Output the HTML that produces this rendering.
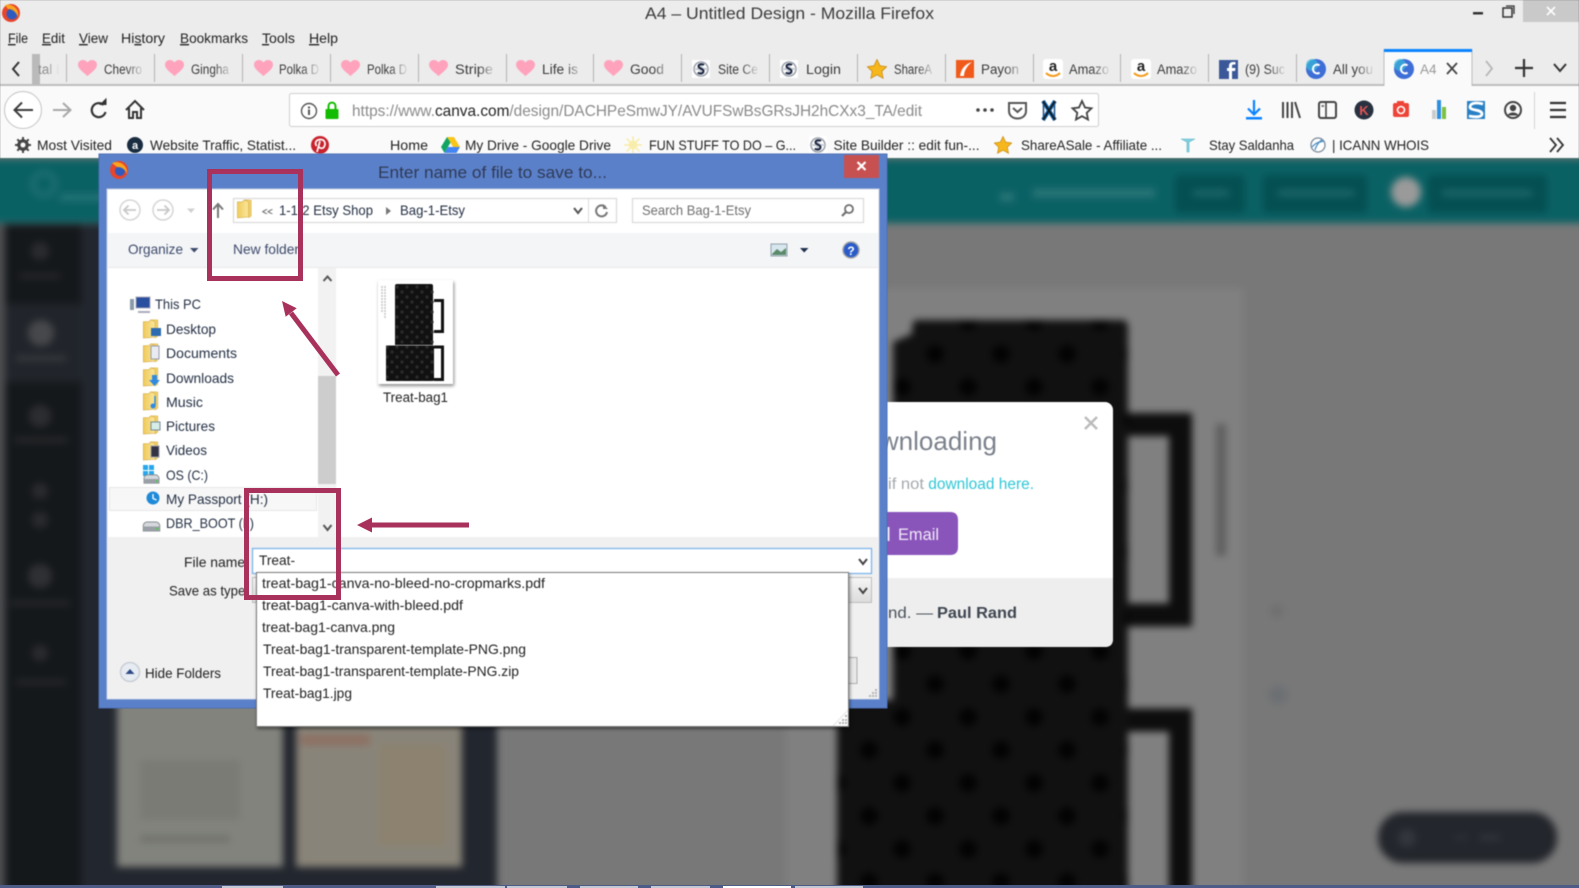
<!DOCTYPE html>
<html lang="en"><head><meta charset="utf-8"><title>A4 – Untitled Design - Mozilla Firefox</title>
<style>
html,body{margin:0;padding:0;width:1579px;height:888px;overflow:hidden;background:#787878}
svg{position:absolute;left:0;top:0;display:block}
.clip{position:absolute;left:0;top:0;width:1579px;height:888px;overflow:hidden}
svg.bg{left:-20px;top:-20px;filter:blur(3.8px)}
text{font-family:"Liberation Sans",sans-serif}
.m{font-size:14px;fill:#222}
.u{text-decoration:underline}
.tb{font-size:13.5px;fill:#3a3a3a}
.bm{font-size:14px;fill:#222}
.d{font-size:14px;fill:#243044}
.l{font-size:14px;fill:#222}
</style></head><body>
<!-- blurred Canva backdrop -->
<div class="clip">
<svg class="bg" width="1619" height="928" viewBox="-20 -20 1619 928" xmlns="http://www.w3.org/2000/svg">
<defs>
<pattern id="dots" width="66" height="66" patternUnits="userSpaceOnUse" x="-1" y="14">
<circle cx="12" cy="10" r="9" fill="#030303"/><circle cx="45" cy="43" r="9" fill="#030303"/></pattern>
</defs>
<rect x="-20" y="-20" width="1619" height="928" fill="#787878"/>
<rect x="786" y="288" width="457" height="620" fill="#808080"/>
<rect x="-20" y="224" width="26" height="684" fill="#4e4f51"/>
<rect x="5" y="224" width="492" height="684" fill="#22262e"/>
<rect x="5" y="224" width="76" height="684" fill="#15181b"/>
<rect x="5" y="304" width="76" height="78" fill="#21252b"/>
<circle cx="40" cy="251" r="9" fill="#2a2b2f"/><rect x="20" y="274" width="40" height="4" fill="#2a2b2f"/>
<circle cx="41" cy="333" r="13" fill="#47484b"/><rect x="16" y="356" width="50" height="5" fill="#3a3b3e"/>
<circle cx="40" cy="416" r="11" fill="#2c2d30"/><rect x="14" y="438" width="54" height="4" fill="#2b2c2f"/>
<circle cx="40" cy="491" r="8" fill="#2a2b2e"/><circle cx="40" cy="520" r="8" fill="#2a2b2e"/>
<circle cx="40" cy="576" r="12" fill="#2f3033"/><rect x="10" y="601" width="60" height="4" fill="#2a2b2e"/>
<circle cx="40" cy="653" r="8" fill="#2a2b2e"/><rect x="16" y="680" width="50" height="4" fill="#2a2b2e"/>
<rect x="117" y="690" width="166" height="177" fill="#82837d"/>
<rect x="296" y="690" width="166" height="177" fill="#898479"/>
<rect x="300" y="735" width="70" height="10" fill="#8d6f62"/>
<rect x="140" y="760" width="100" height="60" fill="#7a7b74"/>
<rect x="140" y="835" width="90" height="8" fill="#73746e"/>
<rect x="380" y="745" width="65" height="100" fill="#8c826f"/>
<rect x="-20" y="159" width="1619" height="64" fill="#0a6164"/>
<rect x="60" y="195" width="70" height="5" fill="#2c7a7c"/>
<circle cx="44" cy="184" r="11" fill="none" stroke="#2c7a7c" stroke-width="3"/>
<rect x="1000" y="193" width="14" height="8" fill="#2b7779"/><rect x="1033" y="189" width="122" height="8" fill="#2b7779"/>
<rect x="1175" y="175" width="70" height="38" rx="4" fill="#044f52"/><rect x="1193" y="190" width="36" height="6" fill="#1e686a"/>
<rect x="1263" y="175" width="104" height="38" rx="4" fill="#044f52"/><rect x="1278" y="190" width="76" height="6" fill="#1e686a"/>
<rect x="1428" y="175" width="119" height="38" rx="4" fill="#044f52"/><rect x="1442" y="190" width="90" height="6" fill="#1e686a"/>
<circle cx="1406" cy="192" r="15" fill="#9a9a9a"/>
<!-- bag -->
<path d="M916 320H1122Q1128 320 1128 328V700H893V342L912 334Q912 320 916 320Z" fill="#111"/>
<rect x="837" y="700" width="291" height="208" fill="#111"/>
<path d="M916 320H1128V700H893V342L912 334Z" fill="url(#dots)"/>
<rect x="837" y="700" width="291" height="208" fill="url(#dots)"/>
<path d="M1128 424.500H1180.500V615H1128" fill="none" stroke="#0d0d0d" stroke-width="23"/>
<path d="M1128 720H1180.500V910" fill="none" stroke="#0d0d0d" stroke-width="23"/>
<rect x="1216" y="424" width="10" height="132" fill="#5f5f5f"/>
<circle cx="1277" cy="611" r="7" fill="#707070"/><circle cx="1278" cy="695" r="10" fill="#6d7073"/>
<rect x="1378" y="812" width="179" height="51" rx="25" fill="#23262c"/>
<circle cx="1407" cy="838" r="9" fill="#33363c"/><rect x="1480" y="835" width="20" height="5" fill="#34373d"/><rect x="1455" y="836" width="12" height="3" fill="#34373d"/>
</svg>
</div>

<svg width="1579" height="888" viewBox="0 0 1579 888" xmlns="http://www.w3.org/2000/svg">
<defs>
<filter id="b1" color-interpolation-filters="sRGB"><feGaussianBlur stdDeviation="0.42"/></filter>
<filter id="sh" x="-5%" y="-5%" width="110%" height="110%" color-interpolation-filters="sRGB"><feDropShadow dx="1" dy="2" stdDeviation="1.5" flood-color="#000" flood-opacity=".45"/></filter>
<linearGradient id="fade"><stop offset="0" stop-color="#ececec" stop-opacity="0"/><stop offset=".7" stop-color="#ececec"/><stop offset="1" stop-color="#ececec"/></linearGradient>
<linearGradient id="fold" x1="0" y1="0" x2="1" y2="0"><stop offset="0" stop-color="#efc95c"/><stop offset="1" stop-color="#fbe79a"/></linearGradient>
<linearGradient id="combo" x1="0" y1="0" x2="0" y2="1"><stop offset="0" stop-color="#f6f6f6"/><stop offset="1" stop-color="#dcdcdc"/></linearGradient>
<pattern id="tdots" width="10" height="10" patternUnits="userSpaceOnUse"><circle cx="2" cy="2" r="1.6" fill="#2c2c2c"/><circle cx="7" cy="7" r="1.6" fill="#2c2c2c"/></pattern>
<symbol id="heart" viewBox="0 0 20 20" preserveAspectRatio="none"><path d="M10 19C4 13 0 10 0 5.500C0 2 2.500 0 5.200 0C7.300 0 9 1.200 10 3C11 1.200 12.700 0 14.800 0C17.500 0 20 2 20 5.500C20 10 16 13 10 19Z" fill="#ffa3bd"/></symbol>
<symbol id="site" viewBox="0 0 18 18"><rect width="18" height="18" fill="#fff"/><circle cx="9" cy="9" r="7" fill="none" stroke="#9a9fa8" stroke-width="1.500"/><path d="M9 0L10.500 7.500L18 9L10.500 10.500L9 18L7.500 10.500L0 9L7.500 7.500Z" fill="#c4c8cf"/><path d="M12 5C10.500 3.800 6.800 3.800 6.500 6.200C6.300 8.800 11.700 8.500 11.500 11.300C11.300 14 7.500 14 5.800 12.500" fill="none" stroke="#18233f" stroke-width="2"/></symbol>
<symbol id="star" viewBox="0 0 20 20"><path d="M10 0.500L13 6.800L19.800 7.700L14.800 12.300L16.100 19.200L10 15.800L3.900 19.200L5.200 12.300L0.200 7.700L7 6.800Z" fill="#f6b71c" stroke="#c98a12" stroke-width=".8"/></symbol>
<symbol id="amz" viewBox="0 0 20 20"><rect width="20" height="20" rx="3" fill="#fff"/><text x="10" y="12" font-size="15" font-weight="bold" text-anchor="middle" fill="#222" style="font-family:'Liberation Sans',sans-serif">a</text><path d="M3 14C7 18 13 18 17 14" fill="none" stroke="#f39a1c" stroke-width="2"/></symbol>
<symbol id="canva" viewBox="0 0 20 20"><circle cx="10" cy="10" r="10" fill="#3d6fd6"/><circle cx="6" cy="6" r="6" fill="#38b6d9" opacity=".7"/><path d="M13.500 6.500C11.500 4.500 7 6 7 10C7 14 11.500 15.500 13.500 13.500" fill="none" stroke="#fff" stroke-width="2"/></symbol>
<symbol id="folder" viewBox="0 0 18 22"><path d="M0 3H6L8 1H13V20L0 21Z" fill="url(#fold)" stroke="#d2ac4a" stroke-width=".7"/><path d="M8 1H16V19L13 21V3Z" fill="#f1cf68" stroke="#d2ac4a" stroke-width=".5"/></symbol>
<symbol id="drive" viewBox="0 0 20 12"><path d="M1 5C1 3 3 1 5 1H15C17 1 19 3 19 5V11H1Z" fill="#d4d8dc" stroke="#7d8288"/><rect x="1" y="6" width="18" height="5" fill="#9aa0a6"/><rect x="15" y="7.500" width="2.500" height="2" fill="#49d04a"/></symbol>
</defs>

<rect x="0" y="885" width="1579" height="3" fill="#4d5b86"/>
<g fill="#c4c9d4"><rect x="222" y="886" width="61" height="2"/><rect x="436" y="886" width="69" height="2"/><rect x="507" y="886" width="60" height="2"/><rect x="580" y="886" width="58" height="2"/><rect x="651" y="886" width="59" height="2"/><rect x="723" y="886" width="68" height="2" fill="#fff"/><rect x="795" y="886" width="68" height="2"/></g>

<!-- Firefox chrome -->
<g filter="url(#b1)">
<rect x="0" y="0" width="1579" height="86" fill="#ececec"/>
<rect x="0" y="84" width="1579" height="2" fill="#bdbdbd"/>
<rect x="0" y="86" width="1579" height="72" fill="#fafafa"/>
<!-- firefox icon -->
<circle cx="11" cy="13" r="9" fill="#e8452a"/><circle cx="12" cy="14" r="5.500" fill="#2f5bc0"/><path d="M5 5C12 3 20 9 18 17C16 12 13 9 8 9Z" fill="#f9a51f"/>
<text x="645" y="19" font-size="17" fill="#3c3c3c" textLength="289" lengthAdjust="spacingAndGlyphs">A4 – Untitled Design - Mozilla Firefox</text>
<rect x="1473" y="12" width="10" height="2.500" fill="#333"/>
<rect x="1503" y="8" width="9" height="9" fill="none" stroke="#333" stroke-width="1.500"/><path d="M1506 6H1514V14" fill="none" stroke="#333" stroke-width="1.300"/>
<rect x="1523" y="0" width="56" height="22" fill="#c9c9c9"/>
<path d="M1547 7L1555 15M1555 7L1547 15" stroke="#fff" stroke-width="1.600"/>

<g class="m">
<text class="m" x="8" y="43" textLength="20" lengthAdjust="spacingAndGlyphs"><tspan class="u">F</tspan>ile</text>
<text class="m" x="42" y="43" textLength="23" lengthAdjust="spacingAndGlyphs"><tspan class="u">E</tspan>dit</text>
<text class="m" x="79" y="43" textLength="29" lengthAdjust="spacingAndGlyphs"><tspan class="u">V</tspan>iew</text>
<text class="m" x="121" y="43" textLength="44" lengthAdjust="spacingAndGlyphs">Hi<tspan class="u">s</tspan>tory</text>
<text class="m" x="180" y="43" textLength="68" lengthAdjust="spacingAndGlyphs"><tspan class="u">B</tspan>ookmarks</text>
<text class="m" x="262" y="43" textLength="33" lengthAdjust="spacingAndGlyphs"><tspan class="u">T</tspan>ools</text>
<text class="m" x="309" y="43" textLength="29" lengthAdjust="spacingAndGlyphs"><tspan class="u">H</tspan>elp</text>
</g>

<!-- tabs -->
<path d="M19 62L13 69L19 76" fill="none" stroke="#333" stroke-width="2"/>
<rect x="32" y="54" width="8" height="30" fill="#a9a9a9" opacity=".75"/>
<text class="tb" x="38" y="74" style="fill:#888">tal B</text>
<g fill="#b3b3b3">
<rect x="66" y="54" width="1" height="28"/><rect x="154" y="54" width="1" height="28"/><rect x="242" y="54" width="1" height="28"/><rect x="330" y="54" width="1" height="28"/><rect x="418" y="54" width="1" height="28"/><rect x="506" y="54" width="1" height="28"/><rect x="593" y="54" width="1" height="28"/><rect x="681" y="54" width="1" height="28"/><rect x="769" y="54" width="1" height="28"/><rect x="857" y="54" width="1" height="28"/><rect x="945" y="54" width="1" height="28"/><rect x="1033" y="54" width="1" height="28"/><rect x="1120" y="54" width="1" height="28"/><rect x="1208" y="54" width="1" height="28"/><rect x="1296" y="54" width="1" height="28"/>
</g>
<use href="#heart" x="78" y="60" width="19" height="17"/><text class="tb" x="104" y="74" textLength="38" lengthAdjust="spacingAndGlyphs">Chevro</text>
<use href="#heart" x="165" y="60" width="19" height="17"/><text class="tb" x="191" y="74" textLength="38" lengthAdjust="spacingAndGlyphs">Gingha</text>
<use href="#heart" x="254" y="60" width="19" height="17"/><text class="tb" x="279" y="74" textLength="40" lengthAdjust="spacingAndGlyphs">Polka D</text>
<use href="#heart" x="341" y="60" width="19" height="17"/><text class="tb" x="367" y="74" textLength="40" lengthAdjust="spacingAndGlyphs">Polka D</text>
<use href="#heart" x="429" y="60" width="19" height="17"/><text class="tb" x="455" y="74" textLength="38" lengthAdjust="spacingAndGlyphs">Stripe</text>
<use href="#heart" x="516" y="60" width="19" height="17"/><text class="tb" x="542" y="74" textLength="36" lengthAdjust="spacingAndGlyphs">Life is</text>
<use href="#heart" x="604" y="60" width="19" height="17"/><text class="tb" x="630" y="74" textLength="34" lengthAdjust="spacingAndGlyphs">Good</text>
<use href="#site" x="692" y="60" width="18" height="18"/><text class="tb" x="718" y="74" textLength="40" lengthAdjust="spacingAndGlyphs">Site Ce</text>
<use href="#site" x="780" y="60" width="18" height="18"/><text class="tb" x="806" y="74" textLength="35" lengthAdjust="spacingAndGlyphs">Login</text>
<use href="#star" x="867" y="59" width="20" height="20"/><text class="tb" x="894" y="74" textLength="38" lengthAdjust="spacingAndGlyphs">ShareA</text>
<rect x="956" y="60" width="18" height="18" fill="#f05a1a"/><path d="M960 76C961 69 965 64 972 62C967 66 964 71 964 76" fill="#fff"/><text class="tb" x="981" y="74" textLength="38" lengthAdjust="spacingAndGlyphs">Payon</text>
<use href="#amz" x="1043" y="59" width="20" height="20"/><text class="tb" x="1069" y="74" textLength="40" lengthAdjust="spacingAndGlyphs">Amazo</text>
<use href="#amz" x="1131" y="59" width="20" height="20"/><text class="tb" x="1157" y="74" textLength="40" lengthAdjust="spacingAndGlyphs">Amazo</text>
<rect x="1219" y="60" width="19" height="19" fill="#3b5998"/><path d="M1232 79V71H1235L1235.500 68H1232V66C1232 65 1232.500 64.500 1233.500 64.500H1235.500V62H1233C1230.500 62 1229 63.500 1229 66V68H1227V71H1229V79Z" fill="#fff"/><text class="tb" x="1245" y="74" textLength="40" lengthAdjust="spacingAndGlyphs">(9) Suc</text>
<use href="#canva" x="1306" y="59" width="20" height="20"/><text class="tb" x="1333" y="74" textLength="40" lengthAdjust="spacingAndGlyphs">All you</text>
<g fill="url(#fade)">
<rect x="46" y="54" width="19" height="28"/><rect x="126" y="54" width="27" height="28"/><rect x="214" y="54" width="27" height="28"/><rect x="302" y="54" width="27" height="28"/><rect x="390" y="54" width="27" height="28"/><rect x="478" y="54" width="27" height="28"/><rect x="565" y="54" width="27" height="28"/><rect x="653" y="54" width="27" height="28"/><rect x="741" y="54" width="27" height="28"/><rect x="917" y="54" width="27" height="28"/><rect x="1005" y="54" width="27" height="28"/><rect x="1092" y="54" width="27" height="28"/><rect x="1180" y="54" width="27" height="28"/><rect x="1268" y="54" width="27" height="28"/><rect x="1356" y="54" width="27" height="28"/>
</g>
<!-- active tab -->
<path d="M1384 86V49H1472V86Z" fill="#fafafa"/>
<path d="M1384 86V49M1472 49V86" stroke="#bdbdbd" stroke-width="1"/>
<rect x="1384" y="49" width="88" height="3" fill="#0a84ff"/>
<use href="#canva" x="1394" y="59" width="20" height="20"/>
<text class="tb" x="1420" y="74" style="fill:#999">A4</text>
<path d="M1447 63L1457 74M1457 63L1447 74" stroke="#444" stroke-width="1.800"/>
<path d="M1486 61L1492 68.500L1486 76" fill="none" stroke="#b5b5b5" stroke-width="1.800"/>
<path d="M1524 59V77M1515 68H1533" stroke="#333" stroke-width="2.200"/>
<path d="M1554 64L1560 71L1566 64" fill="none" stroke="#333" stroke-width="2"/>

<!-- nav toolbar -->
<circle cx="23" cy="110" r="18.500" fill="#fff" stroke="#c4c4c4"/>
<path d="M33 110H15M22 102.500L14.500 110L22 117.500" fill="none" stroke="#3c3c3c" stroke-width="2"/>
<path d="M70 110H53M63 103L70.500 110L63 117" fill="none" stroke="#a8a8a8" stroke-width="2"/>
<path d="M103.500 105A7 7 0 1 0 105.500 112" fill="none" stroke="#333" stroke-width="2.200"/><path d="M100.500 104.500H106V99Z" fill="#333" stroke="#333"/>
<path d="M126 110L135 101L144 110M129 108V118H133V112H137V118H141V108" fill="none" stroke="#333" stroke-width="2"/>
<rect x="289.500" y="93.500" width="809" height="33" rx="2" fill="#fff" stroke="#cfcfcf"/>
<circle cx="309" cy="111" r="7.500" fill="none" stroke="#555" stroke-width="1.400"/><rect x="308" y="109.500" width="2" height="5.500" fill="#555"/><rect x="308" y="106.500" width="2" height="2" fill="#555"/>
<rect x="325.500" y="109" width="13" height="10" rx="1" fill="#12bc00"/><path d="M328.500 109V106C328.500 101.500 335.500 101.500 335.500 106V109" fill="none" stroke="#12bc00" stroke-width="2"/>
<text x="352" y="116" font-size="16" fill="#8a8a8a" textLength="570" lengthAdjust="spacingAndGlyphs">https://www.<tspan fill="#222">canva.com</tspan>/design/DACHPeSmwJY/AVUFSwBsGRsJH2hCXx3_TA/edit</text>
<g fill="#444"><circle cx="978" cy="110" r="1.800"/><circle cx="985" cy="110" r="1.800"/><circle cx="992" cy="110" r="1.800"/></g>
<path d="M1009 103H1026V111C1026 121 1009 121 1009 111Z" fill="none" stroke="#555" stroke-width="2"/><path d="M1013 108L1017.500 112L1022 108" fill="none" stroke="#555" stroke-width="2"/>
<path d="M1043 101L1055 120M1055 101L1043 120" stroke="#1463a8" stroke-width="4"/><path d="M1043.500 101V120M1054.500 101V120" stroke="#1a4f85" stroke-width="1.500"/><path d="M1043 101L1055 120M1055 101L1043 120" stroke="#111" stroke-width="1.500"/>
<path d="M1082 101L1085 107.500L1091.500 108.300L1086.700 112.800L1088 119.500L1082 116.200L1076 119.500L1077.300 112.800L1072.500 108.300L1079 107.500Z" fill="none" stroke="#444" stroke-width="1.800"/>
<path d="M1254 100V114M1248 108.500L1254 114.500L1260 108.500" fill="none" stroke="#0a84ff" stroke-width="2.200"/><rect x="1246" y="117" width="16" height="2.500" fill="#0a84ff"/>
<path d="M1283 102V118M1287.500 102V118M1292 102V118M1295 102L1300 118" fill="none" stroke="#444" stroke-width="2"/>
<rect x="1319" y="102" width="17" height="16" rx="2" fill="none" stroke="#444" stroke-width="2"/><path d="M1326 102V118" stroke="#444" stroke-width="1.600"/><rect x="1321.500" y="105" width="2.500" height="2" fill="#777"/>
<circle cx="1364" cy="110" r="9.500" fill="#27313f"/><text x="1364" y="115" font-size="13" font-weight="bold" text-anchor="middle" fill="#e25555">K</text>
<rect x="1393" y="103" width="16" height="14" rx="2" fill="#ee4438"/><rect x="1397" y="101" width="7" height="3" fill="#ee4438"/><circle cx="1401" cy="110" r="3.500" fill="none" stroke="#fff" stroke-width="1.600"/>
<rect x="1432" y="110" width="4" height="9" fill="#c9cccb"/><rect x="1437" y="100" width="4" height="19" fill="#2d8fe0"/><rect x="1442" y="107" width="4" height="12" fill="#7bc142"/>
<rect x="1467" y="101" width="18" height="18" fill="#2a80c4"/><path d="M1483 104C1476 102 1470 103 1470 107C1470 111 1482 109 1482 114C1482 117 1476 117.500 1469 116" fill="none" stroke="#fff" stroke-width="2.800"/>
<circle cx="1513" cy="110" r="8" fill="none" stroke="#444" stroke-width="2"/><circle cx="1513" cy="108" r="3.200" fill="#444"/><path d="M1507.500 115.500C1509 111.500 1517 111.500 1518.500 115.500Z" fill="#444"/>
<rect x="1534" y="92" width="1" height="37" fill="#d5d5d5"/>
<path d="M1550 103H1566M1550 110H1566M1550 117H1566" stroke="#333" stroke-width="2.200"/>

<!-- bookmarks -->
<g fill="none" stroke="#444"><circle cx="23" cy="145" r="4.500" stroke-width="2.500"/><path d="M23 137V153M15 145H31M17.300 139.300L28.700 150.700M28.700 139.300L17.300 150.700" stroke-width="2"/></g><circle cx="23" cy="145" r="2.500" fill="#fafafa"/>
<text class="bm" x="37" y="150" textLength="75" lengthAdjust="spacingAndGlyphs">Most Visited</text>
<circle cx="135" cy="145" r="8" fill="#1a2c40"/><text x="135" y="149" font-size="11" font-weight="bold" text-anchor="middle" fill="#fff">a</text>
<text class="bm" x="150" y="150" textLength="146" lengthAdjust="spacingAndGlyphs">Website Traffic, Statist...</text>
<circle cx="320" cy="145" r="9" fill="#c8232c"/><path d="M317 152L320 141M316.500 146C314 142 317 139.500 320.500 139.500C325 139.500 326 144 324 147C322.500 149 320 148.500 319 147" fill="none" stroke="#fff" stroke-width="1.700"/>
<text class="bm" x="390" y="150" textLength="38" lengthAdjust="spacingAndGlyphs">Home</text>
<path d="M447 137H454L460 147H453Z" fill="#f8c61a"/><path d="M447 137L441 147L444.500 153L450.500 142.500Z" fill="#12a463"/><path d="M444.500 153H456.500L460 147H448Z" fill="#4285f4"/>
<text class="bm" x="465" y="150" textLength="146" lengthAdjust="spacingAndGlyphs">My Drive - Google Drive</text>
<circle cx="633" cy="145" r="4.500" fill="#fbf0a8"/><path d="M633 136V154M624 145H642M626.500 138.500L639.500 151.500M639.500 138.500L626.500 151.500" stroke="#f8ecaa" stroke-width="1.500"/>
<text class="bm" x="649" y="150" textLength="147" lengthAdjust="spacingAndGlyphs">FUN STUFF TO DO – G...</text>
<use href="#site" x="809" y="136" width="18" height="18"/>
<text class="bm" x="833.500" y="150" textLength="146" lengthAdjust="spacingAndGlyphs">Site Builder :: edit fun-...</text>
<use href="#star" x="994" y="136" width="18" height="18"/>
<text class="bm" x="1021" y="150" textLength="141" lengthAdjust="spacingAndGlyphs">ShareASale - Affiliate ...</text>
<path d="M1181 139H1195L1189 142V152H1187V142Z" fill="#7fd0de" stroke="#5bb3c8" stroke-width=".6"/>
<text class="bm" x="1209" y="150" textLength="85" lengthAdjust="spacingAndGlyphs">Stay Saldanha</text>
<circle cx="1318" cy="145" r="7" fill="#fff" stroke="#7c8a99" stroke-width="1.300"/><path d="M1312 147C1316 142 1320 142 1324 141M1315 150C1316 146 1319 142 1322 139.500" fill="none" stroke="#4d8ec4" stroke-width="1.300"/>
<text class="bm" x="1332" y="150" textLength="97" lengthAdjust="spacingAndGlyphs">| ICANN WHOIS</text>
<path d="M1550 138L1556 145L1550 152M1557 138L1563 145L1557 152" fill="none" stroke="#333" stroke-width="1.800"/>
</g>

<!-- Canva modal -->
<g filter="url(#b1)">
<rect x="800" y="402" width="313" height="245" rx="8" fill="#fff"/>
<path d="M800 578H1113V639Q1113 647 1105 647H800Z" fill="#eeeeee"/>
<path d="M1085 417L1097 429M1097 417L1085 429" stroke="#bbb" stroke-width="2.500"/>
<text x="997" y="450" font-size="26" text-anchor="end" fill="#7b818c">downloading</text>
<text x="888" y="489" font-size="15.500" fill="#a5a9ae" textLength="36" lengthAdjust="spacingAndGlyphs">if not</text>
<text x="928.300" y="489" font-size="15.500" fill="#2ec7d6" textLength="105.700" lengthAdjust="spacingAndGlyphs">download here.</text>
<path d="M800 512H950Q958 512 958 520V547Q958 555 950 555H800Z" fill="#8a55bb"/>
<rect x="887" y="527" width="2.500" height="14" fill="#efe6f6"/>
<text x="898" y="540" font-size="16.500" fill="#f1e9f8" textLength="41" lengthAdjust="spacingAndGlyphs">Email</text>
<text x="888" y="618" font-size="16" fill="#4a505a" textLength="45" lengthAdjust="spacingAndGlyphs">nd. —</text>
<text x="937" y="618" font-size="16" font-weight="bold" fill="#3f4651" textLength="80" lengthAdjust="spacingAndGlyphs">Paul Rand</text>
</g>

<!-- Save dialog -->
<g filter="url(#b1)">
<rect x="99" y="154" width="788" height="554" fill="#5b80ca" stroke="#4c6fb4"/>
<circle cx="119" cy="170" r="9" fill="#e8452a"/><circle cx="120" cy="171" r="5" fill="#2f5bc0"/><path d="M112 163C119 160 128 165 127 174C125 169 122 167 117 167Z" fill="#f9a51f"/>
<text x="378" y="178" font-size="17" fill="#2e3a55" textLength="229" lengthAdjust="spacingAndGlyphs">Enter name of file to save to...</text>
<rect x="844" y="155" width="35" height="23" fill="#c75050"/>
<path d="M857.500 162L865.500 170M865.500 162L857.500 170" stroke="#fff" stroke-width="2.200"/>
<rect x="107" y="189" width="772" height="510" fill="#fff" stroke="#c7d0e0"/>
<!-- nav row -->
<circle cx="130" cy="210" r="10" fill="#fff" stroke="#d6d6d6" stroke-width="1.500"/><path d="M136 210H124M128.500 205.500L124 210L128.500 214.500" fill="none" stroke="#c8c8c8" stroke-width="1.800"/>
<circle cx="163" cy="210" r="10" fill="#fff" stroke="#d6d6d6" stroke-width="1.500"/><path d="M157 210H169M164.500 205.500L169 210L164.500 214.500" fill="none" stroke="#c8c8c8" stroke-width="1.800"/>
<path d="M187 208.500H195L191 213Z" fill="#d0d0d0"/>
<path d="M218 218V204M213 209.500L218 204L223 209.500" fill="none" stroke="#777" stroke-width="2"/>
<rect x="233.500" y="198.500" width="383" height="24" fill="#fff" stroke="#dcdcdc" stroke-width="1.300"/>
<rect x="588" y="198" width="1" height="25" fill="#dcdcdc"/>
<use href="#folder" x="237" y="199" width="16" height="20"/>
<text x="261" y="215" font-size="12" fill="#777" textLength="13" lengthAdjust="spacingAndGlyphs">«</text>
<text class="d" x="279" y="215" textLength="94" lengthAdjust="spacingAndGlyphs">1-1-2 Etsy Shop</text>
<path d="M386 207L391 211L386 215Z" fill="#777"/>
<text class="d" x="400" y="215" textLength="65" lengthAdjust="spacingAndGlyphs">Bag-1-Etsy</text>
<path d="M574 208L578 213L582 208" fill="none" stroke="#555" stroke-width="2"/>
<path d="M605.500 207A5.500 5.500 0 1 0 607 212" fill="none" stroke="#777" stroke-width="2"/><path d="M603 204V209H608Z" fill="#777"/>
<rect x="632.500" y="198.500" width="231" height="24" fill="#fff" stroke="#dcdcdc" stroke-width="1.300"/>
<text x="642" y="215" font-size="14" fill="#6f6f6f" textLength="109" lengthAdjust="spacingAndGlyphs">Search Bag-1-Etsy</text>
<circle cx="849" cy="209" r="4" fill="none" stroke="#6f6f6f" stroke-width="1.800"/><path d="M846 212L842 216" stroke="#6f6f6f" stroke-width="2.200"/>
<!-- toolbar -->
<rect x="108" y="233" width="770" height="34" fill="#f4f5f7"/>
<rect x="108" y="267" width="770" height="1" fill="#e8e9eb"/>
<text x="128" y="254" font-size="14" fill="#3c4a6b" textLength="55" lengthAdjust="spacingAndGlyphs">Organize</text>
<path d="M190 248H198.500L194.200 252.500Z" fill="#3c4a6b"/>
<text x="233" y="254" font-size="14" fill="#3c4a6b" textLength="66" lengthAdjust="spacingAndGlyphs">New folder</text>
<rect x="771" y="244" width="16" height="12" fill="#d8e6ee" stroke="#8fa0ad"/><path d="M772 254L777 249L781 252L786 248V255H772Z" fill="#5a8a6a"/>
<path d="M800 248H808.500L804.200 252.500Z" fill="#1f2f4c"/>
<circle cx="851" cy="250" r="8" fill="#2a5bc8" stroke="#a5a5a5" stroke-width="1.500"/><text x="851" y="255" font-size="12" font-weight="bold" text-anchor="middle" fill="#fff">?</text>
<!-- scrollbar -->
<rect x="318" y="268" width="18" height="269" fill="#f2f2f2"/>
<rect x="318" y="376" width="18" height="108" fill="#cdcdcd"/>
<path d="M323.500 281L327.500 276.500L331.500 281" fill="none" stroke="#555" stroke-width="2"/>
<path d="M323.500 525L327.500 530L331.500 525" fill="none" stroke="#555" stroke-width="2"/>
<!-- tree -->
<rect x="136" y="297" width="14" height="11" fill="#2a4f9e" stroke="#aab"/><rect x="130" y="299" width="4" height="11" fill="#8a9aa8"/><path d="M138 313H150V311H138Z" fill="#aab"/>
<text class="d" x="155" y="309" textLength="46" lengthAdjust="spacingAndGlyphs">This PC</text>
<use href="#folder" x="143" y="319" width="17" height="20"/><rect x="151" y="328" width="10" height="8" fill="#2d6cb0"/>
<text class="d" x="166" y="334" textLength="50" lengthAdjust="spacingAndGlyphs">Desktop</text>
<use href="#folder" x="143" y="343" width="17" height="20"/><rect x="151" y="346" width="8" height="13" fill="#e8ecf2" stroke="#99a"/>
<text class="d" x="166" y="358" textLength="71" lengthAdjust="spacingAndGlyphs">Documents</text>
<use href="#folder" x="143" y="367" width="17" height="20"/><path d="M152 375H157V380H160L154.500 386L149 380H152Z" fill="#2f8ae0"/>
<text class="d" x="166" y="383" textLength="68" lengthAdjust="spacingAndGlyphs">Downloads</text>
<use href="#folder" x="143" y="391" width="17" height="20"/><circle cx="153" cy="406" r="2.500" fill="#2f8ae0"/><path d="M155 406V396" stroke="#2f8ae0" stroke-width="1.500"/>
<text class="d" x="166" y="407" textLength="37" lengthAdjust="spacingAndGlyphs">Music</text>
<use href="#folder" x="143" y="415" width="17" height="20"/><rect x="151" y="422" width="9" height="8" fill="#d5efe8" stroke="#789"/>
<text class="d" x="166" y="431" textLength="49" lengthAdjust="spacingAndGlyphs">Pictures</text>
<use href="#folder" x="143" y="441" width="17" height="20"/><rect x="151" y="446" width="8" height="11" fill="#334" stroke="#99a"/>
<text class="d" x="166" y="455" textLength="41" lengthAdjust="spacingAndGlyphs">Videos</text>
<g fill="#28a8ea"><rect x="143" y="465" width="5" height="5"/><rect x="149" y="465" width="5" height="5"/><rect x="143" y="471" width="5" height="5"/><rect x="149" y="471" width="5" height="5"/></g>
<use href="#drive" x="142" y="474" width="19" height="10"/>
<text class="d" x="166" y="480" textLength="42" lengthAdjust="spacingAndGlyphs">OS (C:)</text>
<rect x="109.500" y="487.500" width="207" height="23" fill="#f7f7f7" stroke="#e6e6e6"/>
<circle cx="153" cy="498" r="6.500" fill="#1f8ad8"/><path d="M153 494V498.500L156.500 500" fill="none" stroke="#fff" stroke-width="1.300"/>
<text class="d" x="166" y="504" textLength="102" lengthAdjust="spacingAndGlyphs">My Passport (H:)</text>
<use href="#drive" x="142" y="521" width="19" height="11"/>
<text class="d" x="166" y="528" textLength="88" lengthAdjust="spacingAndGlyphs">DBR_BOOT (I:)</text>
<!-- thumbnail -->
<rect x="378" y="280" width="75" height="104" fill="#fff" filter="url(#sh)"/>
<path d="M395 286Q395 284 397 284H431Q433 284 433 286V345H395Z" fill="#111"/>
<rect x="386" y="345.500" width="48" height="35.500" rx="1" fill="#111"/>
<rect x="395" y="284" width="39" height="61" fill="url(#tdots)"/><rect x="386" y="345.500" width="48" height="35.500" fill="url(#tdots)"/>
<path d="M434 300.500H442.500V331.500H434" fill="none" stroke="#111" stroke-width="3"/>
<path d="M434 347H442.500V379.500H434" fill="none" stroke="#111" stroke-width="3"/>
<path d="M382 286V312M385 286V318" stroke="#c4c4c4" stroke-width="1.500" stroke-dasharray="2 1"/>
<text x="383" y="402" font-size="13.500" fill="#222" textLength="65" lengthAdjust="spacingAndGlyphs">Treat-bag1</text>
<!-- bottom panel -->
<rect x="108" y="537" width="770" height="161" fill="#f0f0f0"/>
<text x="184" y="567" font-size="14" fill="#222" textLength="65" lengthAdjust="spacingAndGlyphs">File name:</text>
<text x="169" y="595.500" font-size="14" fill="#222" textLength="80" lengthAdjust="spacingAndGlyphs">Save as type:</text>
<rect x="252.500" y="548.500" width="619" height="25" fill="#fff" stroke="#7eb4ea" stroke-width="1.300"/>
<text x="259" y="565" font-size="14.200" fill="#222" textLength="36" lengthAdjust="spacingAndGlyphs">Treat-</text>
<path d="M859 559L863 564L867 559" fill="none" stroke="#444" stroke-width="2"/>
<rect x="252.500" y="577.500" width="619" height="25" fill="url(#combo)" stroke="#bdbdbd"/>
<path d="M859 588L863 593L867 588" fill="none" stroke="#444" stroke-width="2"/>
<rect x="780" y="657.500" width="77" height="26" fill="#e8e8e8" stroke="#adadad"/>
<g fill="#b5b5b5"><rect x="875" y="689" width="2" height="2"/><rect x="872" y="692" width="2" height="2"/><rect x="875" y="692" width="2" height="2"/><rect x="869" y="695" width="2" height="2"/><rect x="872" y="695" width="2" height="2"/><rect x="875" y="695" width="2" height="2"/></g>
<circle cx="130" cy="672" r="9.500" fill="#e7ebf2" stroke="#c9ced6" stroke-width="1.500"/><path d="M125.500 674H134.500L130 669Z" fill="#2d4a86"/>
<text x="145" y="678" font-size="14" fill="#222" textLength="76" lengthAdjust="spacingAndGlyphs">Hide Folders</text>
<!-- dropdown -->
<rect x="256.500" y="572.500" width="592" height="154" fill="#fff" stroke="#7b7b7b" filter="url(#sh)"/>
<path d="M848 710L833 726" stroke="#e6e6e6" stroke-width="1"/>
<g fill="#b0b0b0"><rect x="845" y="715" width="2" height="2"/><rect x="842" y="719" width="2" height="2"/><rect x="845" y="719" width="2" height="2"/><rect x="839" y="722" width="2" height="2"/><rect x="842" y="722" width="2" height="2"/><rect x="845" y="722" width="2" height="2"/></g>
<text class="l" x="262" y="588" textLength="283" lengthAdjust="spacingAndGlyphs">treat-bag1-canva-no-bleed-no-cropmarks.pdf</text>
<text class="l" x="262" y="610" textLength="201" lengthAdjust="spacingAndGlyphs">treat-bag1-canva-with-bleed.pdf</text>
<text class="l" x="262" y="632" textLength="133" lengthAdjust="spacingAndGlyphs">treat-bag1-canva.png</text>
<text class="l" x="263" y="654" textLength="263" lengthAdjust="spacingAndGlyphs">Treat-bag1-transparent-template-PNG.png</text>
<text class="l" x="263" y="676" textLength="256" lengthAdjust="spacingAndGlyphs">Treat-bag1-transparent-template-PNG.zip</text>
<text class="l" x="263" y="698" textLength="89" lengthAdjust="spacingAndGlyphs">Treat-bag1.jpg</text>
</g>

<!-- annotations -->
<g fill="#a9325d">
<path d="M207 169H303V281H207ZM212 174V276H298V174Z" fill-rule="evenodd"/>
<path d="M244 488H341V600H244ZM249 493V595H336V493Z" fill-rule="evenodd"/>
<path d="M282 301L296.700 308.300L285.700 316.700Z"/>
<path d="M357 525L372 517.500V522.500H469V527.500H372V532.500Z"/>
</g>
<path d="M338 375L291 313" stroke="#a9325d" stroke-width="5"/>
</svg>
</body></html>
